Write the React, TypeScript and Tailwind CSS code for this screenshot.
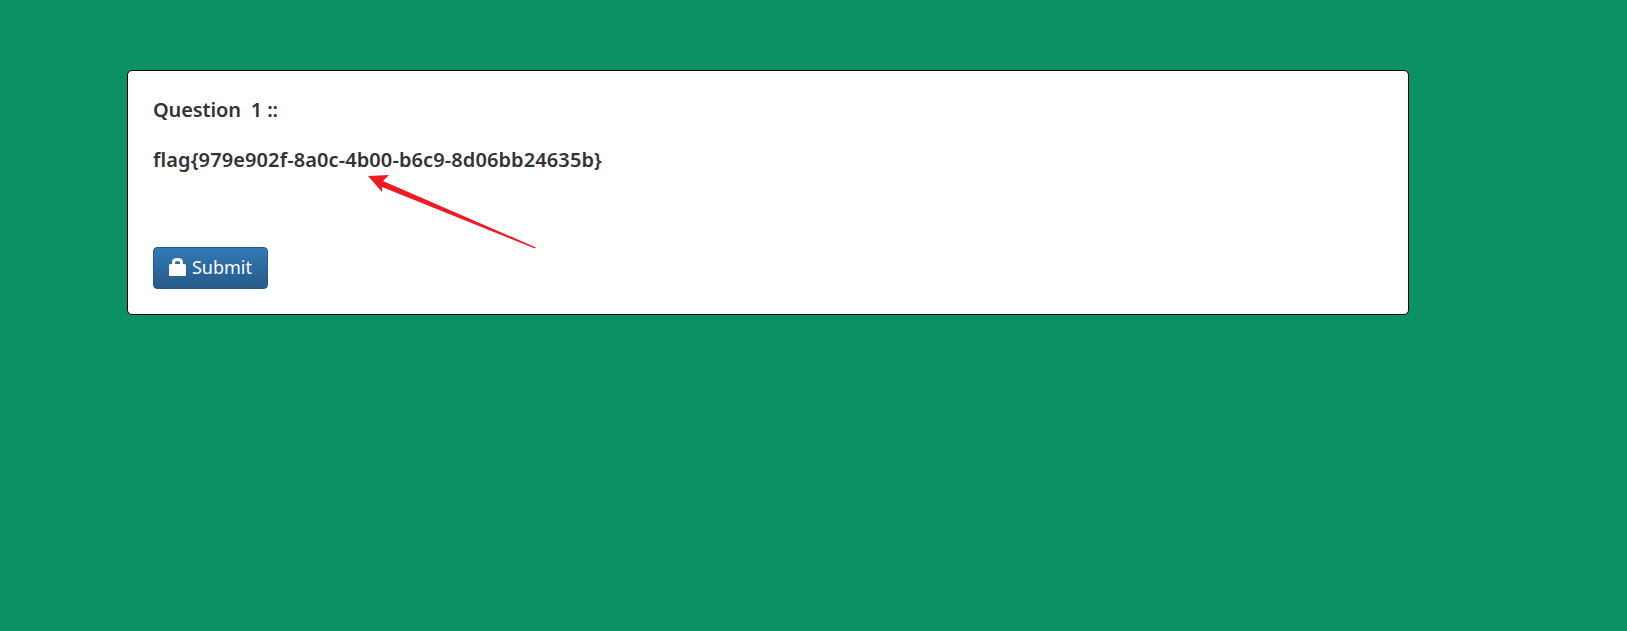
export default function App() {
  return (
    <div className="min-h-[631px] bg-[#0c9164] pt-[70px] pl-[127px] font-['Noto_Sans','Open_Sans',sans-serif]">
      <div className="relative w-[1282px] h-[245px] rounded-[5px] border border-black bg-white pl-[25px] pt-[26px]">
        <h3 className="text-[20px] leading-[26px] font-semibold tracking-[-0.15px] text-[#333] whitespace-pre">Question  1 ::</h3>
        <p className="mt-[23.5px] text-[20px] leading-[26px] font-semibold tracking-[0.1px] text-[#333]">
          flag{'{'}979e902f-8a0c-4b00-b6c9-8d06bb24635b{'}'}
        </p>
        <button className="mt-[74.5px] flex h-[42px] w-[115px] items-center justify-center gap-[6px] rounded-[4px] border border-[#265a88] bg-gradient-to-b from-[#337ab7] to-[#265a88] pb-[2px] text-[18px] text-white">
          <svg width="17" height="18" viewBox="0 0 17 18" fill="white">
            <path d="M0 7.5 Q0 6 1.5 6 H3 V4 Q3 0 8.5 0 Q14 0 14 4 V6 H15.5 Q17 6 17 7.5 V17 Q17 18 16 18 H1 Q0 18 0 17 Z M6 6 H11 V4.5 Q11 3 8.5 3 Q6 3 6 4.5 Z" fillRule="evenodd" />
          </svg>
          Submit
        </button>
        <svg className="absolute left-[240px] top-[104px]" width="172" height="76" viewBox="0 0 172 76">
          <polygon points="0,1 21,0 15,6 168,72.5 167,73.5 14,12 14,17" fill="#ed1c24" />
        </svg>
      </div>
    </div>
  );
}
